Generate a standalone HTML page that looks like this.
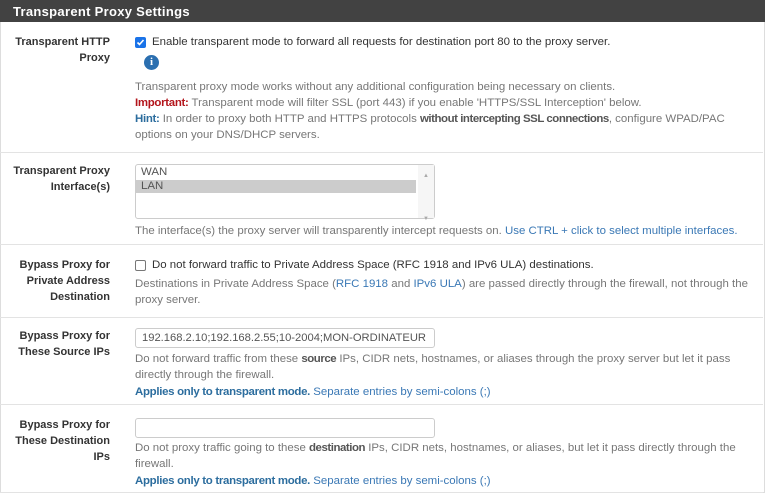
<!DOCTYPE html>
<html><head><style>
*{box-sizing:border-box;margin:0;padding:0}
body{width:768px;height:495px;background:#fff;font-family:"Liberation Sans",Arial,sans-serif;font-size:11.45px;color:#333;position:relative;overflow:hidden}
.hd{position:absolute;left:0;top:0;width:765px;height:22px;background:#424242;color:#fff;font-weight:bold;font-size:13px;padding:4px 0 0 13px;letter-spacing:.3px}
.panel{position:absolute;left:0;top:22px;width:765px;height:471px;border:1px solid #ddd;border-top:none}
.row{position:absolute;left:0;width:763px;border-bottom:1px solid #e3e3e3}
.lbl{position:absolute;right:658px;text-align:right;font-weight:bold;line-height:16px;width:110px;color:#333;font-size:11px}
.t{position:absolute;left:135px;line-height:16px;color:#777;white-space:nowrap}
.b{color:#555;font-weight:bold;letter-spacing:-.45px}
.blue{color:#3a78b5}
.hb{color:#2c6d9e;font-weight:bold;letter-spacing:-.3px}
.cb{position:absolute;left:135px;width:11px;height:11px;border-radius:2px}
.inp{position:absolute;left:135px;width:300px;height:20px;border:1px solid #ccc;border-radius:3px;padding:2px 6px;color:#555;line-height:14px;white-space:nowrap;overflow:hidden;font-size:11.2px}
</style></head><body>
<div class="hd">Transparent Proxy Settings</div>
<div class="panel"></div>

<div class="row" style="top:22px;height:131px"></div>
<div class="lbl" style="top:34px">Transparent HTTP<br>Proxy</div>
<div class="cb" style="top:37px;background:#1a73e8"><svg width="11" height="11" viewBox="0 0 11 11"><path d="M2.5 5.5l2 2 4-4.5" stroke="#fff" stroke-width="1.6" fill="none"/></svg></div>
<div class="t" style="left:152px;top:34px;color:#333">Enable transparent mode to forward all requests for destination port 80 to the proxy server.</div>
<div style="position:absolute;left:144px;top:55px;width:15px;height:15px;border-radius:50%;background:#2b6fb0;color:#fff;font-weight:bold;font-size:11px;text-align:center;line-height:15px;font-family:'Liberation Serif',serif">i</div>
<div class="t" style="top:79px">Transparent proxy mode works without any additional configuration being necessary on clients.</div>
<div class="t" style="top:95px"><span style="color:#b3141b;font-weight:bold;letter-spacing:-.3px">Important:</span> Transparent mode will filter SSL (port 443) if you enable 'HTTPS/SSL Interception' below.</div>
<div class="t" style="top:111px"><span class="hb">Hint:</span> In order to proxy both HTTP and HTTPS protocols <span class="b">without intercepting SSL connections</span>, configure WPAD/PAC</div>
<div class="t" style="top:127px">options on your DNS/DHCP servers.</div>

<div class="row" style="top:153px;height:92px"></div>
<div class="lbl" style="top:163px">Transparent Proxy<br>Interface(s)</div>
<div style="position:absolute;left:135px;top:164px;width:300px;height:55px;border:1px solid #ccc;border-radius:3px;color:#555;line-height:13px">
<div style="padding:1px 5px">WAN</div>
<div style="padding:0 5px;background:#ccc;width:280px">LAN</div>
<div style="position:absolute;right:0;top:0;width:16px;height:53px;background:#f6f6f6;color:#aaa;font-size:6px;text-align:center"><div style="margin-top:5px">▲</div><div style="margin-top:30px">▼</div></div>
</div>
<div class="t" style="top:223px">The interface(s) the proxy server will transparently intercept requests on. <span class="blue">Use CTRL + click to select multiple interfaces.</span></div>

<div class="row" style="top:245px;height:73px"></div>
<div class="lbl" style="top:257px">Bypass Proxy for<br>Private Address<br>Destination</div>
<div class="cb" style="top:260px;border:1px solid #777;background:#fff"></div>
<div class="t" style="left:152px;top:257px;color:#333">Do not forward traffic to Private Address Space (RFC 1918 and IPv6 ULA) destinations.</div>
<div class="t" style="top:276px">Destinations in Private Address Space (<span class="blue">RFC 1918</span> and <span class="blue">IPv6 ULA</span>) are passed directly through the firewall, not through the</div>
<div class="t" style="top:292px">proxy server.</div>

<div class="row" style="top:318px;height:87px"></div>
<div class="lbl" style="top:328px">Bypass Proxy for<br>These Source IPs</div>
<div class="inp" style="top:328px">192.168.2.10;192.168.2.55;10-2004;MON-ORDINATEUR</div>
<div class="t" style="top:351px">Do not forward traffic from these <span class="b">source</span> IPs, CIDR nets, hostnames, or aliases through the proxy server but let it pass</div>
<div class="t" style="top:367px">directly through the firewall.</div>
<div class="t" style="top:384px"><span class="hb">Applies only to transparent mode.</span> <span class="blue">Separate entries by semi-colons (;)</span></div>

<div class="row" style="top:405px;height:88px"></div>
<div class="lbl" style="top:417px">Bypass Proxy for<br>These Destination<br>IPs</div>
<div class="inp" style="top:418px"></div>
<div class="t" style="top:440px">Do not proxy traffic going to these <span class="b">destination</span> IPs, CIDR nets, hostnames, or aliases, but let it pass directly through the</div>
<div class="t" style="top:456px">firewall.</div>
<div class="t" style="top:473px"><span class="hb">Applies only to transparent mode.</span> <span class="blue">Separate entries by semi-colons (;)</span></div>
</body></html>
